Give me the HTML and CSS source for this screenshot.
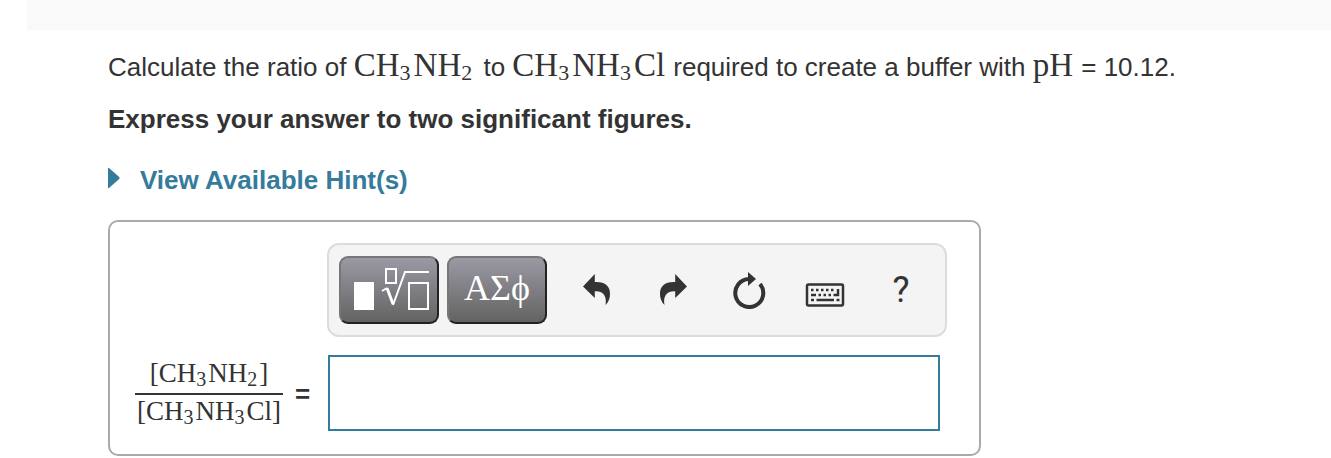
FILE: index.html
```html
<!DOCTYPE html>
<html lang="en">
	<head>
		<meta charset="utf-8">
		<meta name="viewport" content="width=device-width, initial-scale=1">
		<title>Buffer ratio</title>
		<link rel="stylesheet" href="styles.css">
	</head>
	<body>
		<div class="part-header"></div>
		<main class="part">
			<p class="question">Calculate the ratio of <span class="math">CH<sub>3</sub>NH<sub>2</sub></span> to <span class="math">CH<sub>3</sub>NH<sub>3</sub>Cl</span> required to create a buffer with <span class="math">pH</span> = 10.12.</p>
			<p class="instructions">Express your answer to two significant figures.</p>
			<a class="hints" href="#hints">
				<svg class="hints-arrow" width="12" height="22" viewBox="0 0 12 22" aria-hidden="true"><path d="M0 1.5 Q0 .2 1 1 L11.2 10 Q12 11 11.2 12 L1 21 Q0 21.8 0 20.5 Z"/></svg>
				View Available Hint(s)
			</a>

			<form class="answer">
				<div class="toolbar" role="toolbar" aria-label="Equation tools">
					<button type="button" class="palette" aria-label="Templates">
						<svg width="80" height="48" viewBox="0 0 80 48" aria-hidden="true">
							<rect x="5" y="18" width="20" height="28" fill="#fff"/>
							<g fill="none" stroke="#fff" stroke-width="2">
								<rect x="37" y="5" width="10" height="14"/>
								<path d="M33 27 l5 -3 M55 8 H80"/>
								<path d="M38 24 L44 40" stroke-width="3"/>
								<path d="M44 41 L56 8"/>
								<rect x="60" y="19" width="19" height="26"/>
							</g>
						</svg>
					</button>
					<button type="button" class="palette" aria-label="Symbols">ΑΣϕ</button>
					<div class="tools">
						<button type="button" class="tool" aria-label="Undo">
							<svg width="28" height="32" viewBox="0 0 28 32" aria-hidden="true"><path d="M0 12.5 L11.8 0 V8 C22 7.5 27.2 12 27 20 C27 24.5 25.5 28 22.5 31 C24 23 21 16.8 11.8 17.3 V24 Z"/></svg>
						</button>
						<button type="button" class="tool" aria-label="Redo">
							<svg class="flip" width="28" height="32" viewBox="0 0 28 32" aria-hidden="true"><path d="M0 12.5 L11.8 0 V8 C22 7.5 27.2 12 27 20 C27 24.5 25.5 28 22.5 31 C24 23 21 16.8 11.8 17.3 V24 Z"/></svg>
						</button>
						<button type="button" class="tool" aria-label="Reset">
							<svg width="34" height="38" viewBox="0 0 34 38" aria-hidden="true">
								<path d="M17 8 A14 14 0 1 0 28 13" fill="none" stroke="#333" stroke-width="4"/>
								<path d="M16 1 L24 8 L16 15 Z"/>
							</svg>
						</button>
						<button type="button" class="tool" aria-label="Keyboard shortcuts">
							<svg class="keyboard" width="40" height="24" viewBox="0 0 40 24" aria-hidden="true">
								<rect x="2" y="1.5" width="36" height="21" rx="1.5" fill="none" stroke="#333" stroke-width="2.5"/>
								<path d="M6 7 h25" fill="none" stroke="#333" stroke-width="2.5" stroke-dasharray="2.5 2.5"/>
								<path d="M6 12 h5 m2.5 0 h2.5 m2.5 0 h2.5 m2.5 0 h2.5 m2.5 0 H33 V6 M6 17 h3 m2.5 0 h17.5 m2.5 0 h3" fill="none" stroke="#333" stroke-width="2.5"/>
							</svg>
						</button>
						<button type="button" class="tool" aria-label="Help">?</button>
					</div>
				</div>

				<label class="answer-label" for="ratio">
					<span class="fraction">
						<span class="numerator">[CH<sub>3</sub>NH<sub>2</sub>]</span>
						<span class="denominator">[CH<sub>3</sub>NH<sub>3</sub>Cl]</span>
					</span>
					<span class="equals">=</span>
				</label>
				<input class="answer-input" id="ratio" type="text" autocomplete="off">
			</form>
		</main>
	</body>
</html>
```
FILE: styles.css
```css
* {
	box-sizing: border-box;
}

body {
	margin: 0;
	background-color: #fff;
	color: #333;
	font-family: "Liberation Sans", Arial, sans-serif;
	font-size: 26px;
	line-height: 36px;
}

.part-header {
	height: 30px;
	margin-left: 27px;
	background-color: #f9f9f9;
}

.part {
	padding: 19px 28px 0 108px;
}

p {
	margin: 0 0 16px;
}

/* Formulas */

.math,
.fraction {
	font-family: "Liberation Serif", "Times New Roman", serif;
}

.math {
	padding-right: 1px;
	font-size: 33px;
	line-height: 1;
}

sub {
	padding-right: 3px;
	font-size: 22px;
	line-height: 0;
	vertical-align: -4px;
}

.instructions {
	margin-bottom: 25px;
	font-weight: bold;
}

.hints {
	display: flex;
	align-items: center;
	gap: 20px;
	width: fit-content;
	margin-bottom: 22px;
	color: #357b9c;
	font-weight: bold;
	text-decoration: none;
}

.hints-arrow {
	margin-bottom: 4px;
	fill: currentColor;
}

/* Answer box */

.answer {
	display: grid;
	grid-template-columns: 217px 1fr;
	row-gap: 18px;
	max-width: 873px;
	padding: 21px 32px 23px 0;
	border: 2px solid #aaa;
	border-radius: 10px;
}

.toolbar {
	grid-column: 2;
	display: flex;
	align-items: center;
	gap: 8px;
	padding: 11px 4px 11px 10px;
	border: 2px solid #dcdcdc;
	border-radius: 12px;
	background-color: #f4f4f4;
}

.palette {
	display: flex;
	align-items: center;
	justify-content: center;
	width: 100px;
	height: 68px;
	padding: 0 0 4px;
	border: 2px solid;
	border-color: #777 #222 #222 #777;
	border-radius: 9px;
	background-image: linear-gradient(to bottom, #9b99a3, #636363);
	color: #fff;
	font-family: "Liberation Serif", "DejaVu Serif", serif;
	font-size: 36px;
}

.tools {
	display: flex;
	flex: 1;
	padding-left: 4px;
}

.tool {
	display: flex;
	align-items: center;
	justify-content: center;
	flex: 0 1 76px;
	height: 68px;
	padding: 0;
	border: 0;
	background: none;
	color: #333;
	font-family: Roboto, "Liberation Sans", sans-serif;
	font-size: 36px;
}

.tool svg {
	fill: #333;
}

.tool .flip {
	transform: scaleX(-1);
}

.tool .keyboard {
	margin-top: 10px;
}

.answer-label {
	display: flex;
	align-items: center;
	gap: 12px;
	padding-left: 25px;
}

.fraction {
	display: flex;
	flex-direction: column;
	width: 148px;
	font-size: 27px;
	text-align: center;
	white-space: nowrap;
}

.fraction sub {
	padding-right: 2px;
	font-size: 20px;
}

.numerator {
	padding-bottom: 2px;
}

.denominator {
	padding-bottom: 4px;
	border-top: 2px solid #333;
	line-height: 32px;
}

.equals {
	padding-top: 2px;
	font-weight: bold;
}

.answer-input {
	width: calc(100% - 8px);
	height: 76px;
	margin-left: 1px;
	padding: 0 12px;
	border: 2px solid #357b9c;
	background-color: #fff;
	color: #333;
	font: inherit;
}

.answer-input:focus {
	outline: none;
}
```
